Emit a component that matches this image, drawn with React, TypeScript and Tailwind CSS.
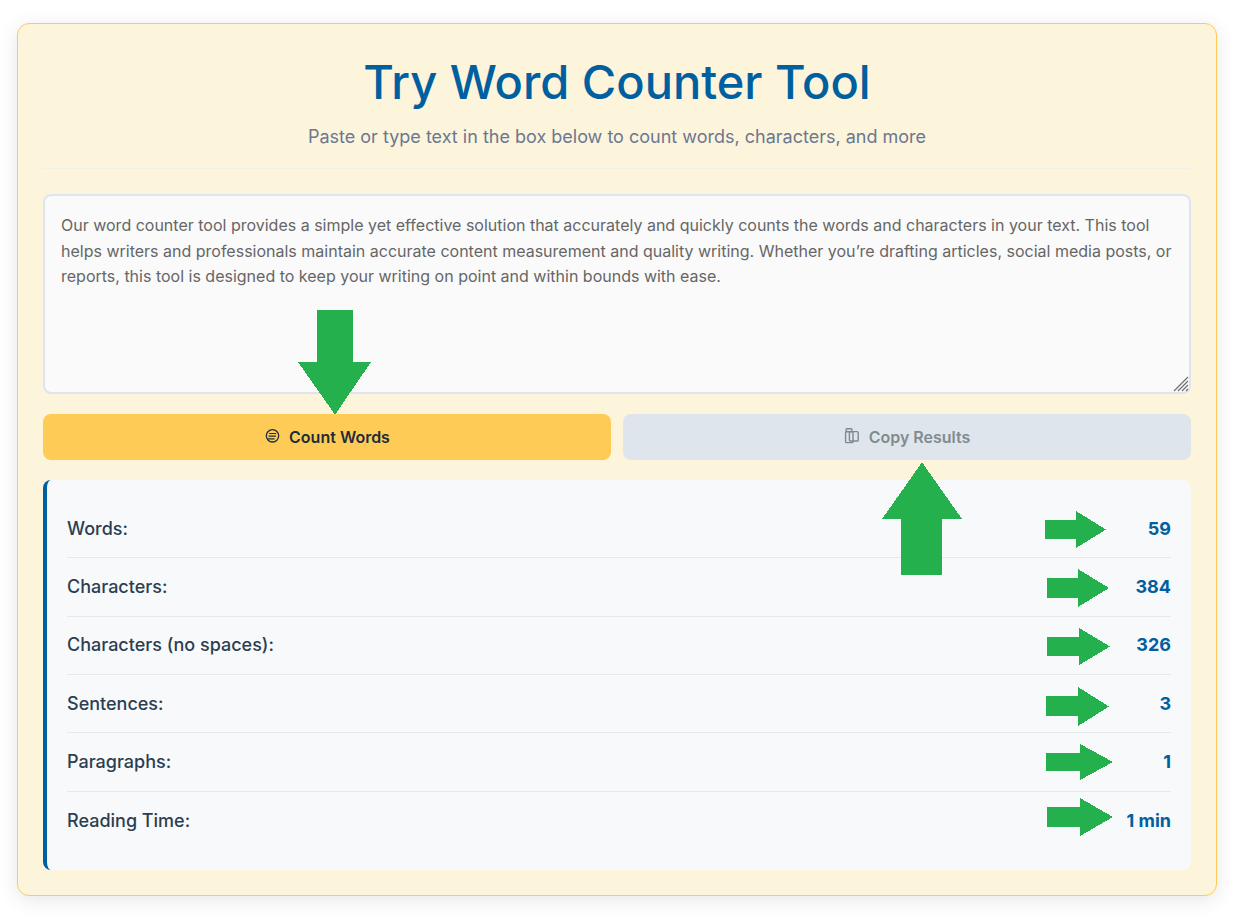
import * as React from "react";

const SAMPLE_TEXT =
  "Our word counter tool provides a simple yet effective solution that accurately and quickly counts the words and characters in your text. This tool helps writers and professionals maintain accurate content measurement and quality writing. Whether you’re drafting articles, social media posts, or reports, this tool is designed to keep your writing on point and within bounds with ease.";

interface Stat {
  label: string;
  value: string;
  arrow: ArrowShape;
}

// Callout arrow pointing right: overall box, where the head starts, and the shaft band.
interface ArrowShape {
  width: number;
  height: number;
  head: number;
  shaft: [number, number];
  right: number;
  top: number;
}

const STATS: Stat[] = [
  { label: "Words:", value: "59", arrow: { width: 61, height: 37, head: 31, shaft: [9, 28], right: 65, top: 11 } },
  { label: "Characters:", value: "384", arrow: { width: 62, height: 38, head: 31, shaft: [9, 29], right: 62, top: 11 } },
  { label: "Characters (no spaces):", value: "326", arrow: { width: 63, height: 37, head: 32, shaft: [9, 28], right: 61, top: 11 } },
  { label: "Sentences:", value: "3", arrow: { width: 63, height: 39, head: 32, shaft: [9, 29], right: 62, top: 12 } },
  { label: "Paragraphs:", value: "1", arrow: { width: 67, height: 36, head: 34, shaft: [9, 27], right: 58, top: 11 } },
  { label: "Reading Time:", value: "1 min", arrow: { width: 66, height: 38, head: 33, shaft: [9, 29], right: 58, top: 6 } },
];

export default function App() {
  const [text, setText] = React.useState(SAMPLE_TEXT);

  return (
    <main className="bg-white pt-[23px] pr-[23px] pb-[22px] pl-[17px] font-['Inter',sans-serif]">
      <section className="rounded-xl border border-[#ffcb57] bg-[#fdf4dc] p-[25px] shadow-[0_4px_20px_rgba(0,0,0,0.1)]">
        <header className="border-b border-[#f0f0ea] pb-5 text-center">
          <h1 className="pt-[3px] text-[47px] leading-[60px] font-medium text-[#00609f]">
            Try Word Counter Tool
          </h1>
          <p className="mt-[13px] text-lg leading-[23px] text-[#6b7890]">
            Paste or type text in the box below to count words, characters, and more
          </p>
        </header>

        <div className="relative mt-[25px]">
          <textarea
            aria-label="Text to count"
            value={text}
            onChange={(e) => setText(e.target.value)}
            spellCheck={false}
            className="block h-[200px] w-full resize-none rounded-lg border-2 border-[#dee5ee] bg-[#fafafa] px-4 pt-[17px] pb-4 text-base leading-[1.6] text-[#666666] outline-none"
          />
          <ResizeGrip />
        </div>

        <div className="mt-5 grid grid-cols-2 gap-3">
          <div className="relative">
            <button
              type="button"
              className="flex h-[46px] w-full items-center justify-center gap-[9px] rounded-lg bg-[#ffcb57] text-base font-semibold text-[#1f2b3a]"
            >
              <CountIcon />
              Count Words
            </button>
            <DownArrow />
          </div>
          <div className="relative">
            <button
              type="button"
              className="flex h-[46px] w-full items-center justify-center gap-[9px] rounded-lg bg-[#dfe5ed] text-base font-semibold text-[#7f8c8d]"
            >
              <CopyIcon />
              Copy Results
            </button>
            <UpArrow />
          </div>
        </div>

        <dl className="mt-5 grid min-h-[390px] auto-rows-fr rounded-lg border-l-4 border-[#00609f] bg-[#f8f9fb] p-5">
          {STATS.map((stat) => (
            <StatRow key={stat.label} stat={stat} />
          ))}
        </dl>
      </section>
    </main>
  );
}

function StatRow({ stat }: { stat: Stat }) {
  return (
    <div className="relative flex items-center justify-between border-b border-[#e6e9ec] text-lg leading-7 last:border-b-0">
      <dt className="font-medium text-[#2c3e50]">{stat.label}</dt>
      <dd className="font-bold text-[#00609f]">{stat.value}</dd>
      <RightArrow shape={stat.arrow} />
    </div>
  );
}

function RightArrow({ shape }: { shape: ArrowShape }) {
  const { width: w, height: h, head, shaft, right, top } = shape;
  return (
    <svg
      aria-hidden
      width={w}
      height={h}
      className="absolute fill-[#24b14d]"
      style={{ right, top }}
      shapeRendering="crispEdges"
    >
      <path
        d={`M0 ${shaft[0]}H${head}V0L${w} ${h / 2}L${head} ${h}V${shaft[1]}H0Z`}
      />
    </svg>
  );
}

function DownArrow() {
  return (
    <svg
      aria-hidden
      viewBox="0 0 73 104"
      shapeRendering="crispEdges"
      className="pointer-events-none absolute bottom-full left-1/2 z-10 -ml-[29px] h-[104px] w-[73px] fill-[#24b14d]"
    >
      <path d="M19 0H55V52H73L37.5 104H36.5L0 52H19Z" />
    </svg>
  );
}

function UpArrow() {
  return (
    <svg
      aria-hidden
      viewBox="0 0 80 112"
      shapeRendering="crispEdges"
      className="pointer-events-none absolute top-full left-1/2 z-10 mt-[3px] -ml-[25px] h-28 w-20 fill-[#24b14d]"
    >
      <path d="M39.5 0H40.5L80 56H60V112H19V56H0Z" />
    </svg>
  );
}

function ResizeGrip() {
  return (
    <svg
      aria-hidden
      viewBox="0 0 16 16"
      className="pointer-events-none absolute right-[2px] bottom-[2px] size-4 stroke-[#6f6f6f]"
      strokeWidth="1.2"
    >
      <path d="M1 15L15 1M5 15L15 5M9 15L15 9M13 15L15 13" />
    </svg>
  );
}

function CountIcon() {
  return (
    <svg
      aria-hidden
      viewBox="0 0 16 16"
      className="mb-0.5 size-4"
      fill="none"
      stroke="currentColor"
      strokeWidth="1.3"
    >
      <circle cx="8.5" cy="7.8" r="6.2" />
      <path d="M5.2 5.5H12.2M4.6 8.1H12M3.6 10.9H10.6" strokeWidth="1.2" />
    </svg>
  );
}

function CopyIcon() {
  return (
    <svg
      aria-hidden
      viewBox="0 0 16 16"
      className="mb-0.5 size-4"
      fill="none"
      stroke="currentColor"
      strokeWidth="1.4"
    >
      <path d="M2.2 4V1.2Q2.2 0.7 2.9 0.7H7.1Q7.8 0.7 7.8 1.2V4" />
      <rect x="1.6" y="3.8" width="7.4" height="10.8" rx="0.8" />
      <rect x="5.4" y="3.6" width="8.8" height="9.4" rx="0.8" />
    </svg>
  );
}
